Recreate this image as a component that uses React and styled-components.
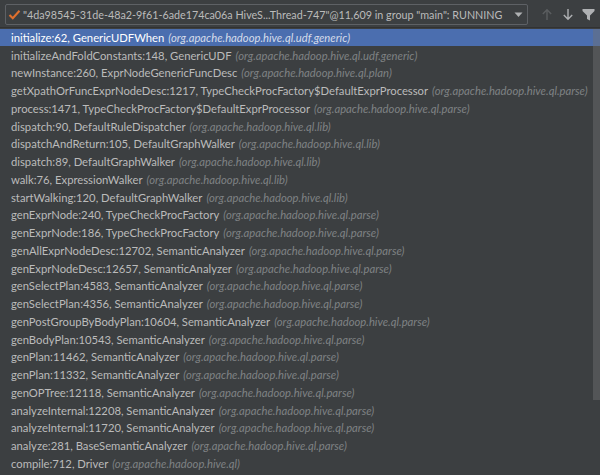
import React from "react";
import styled, { createGlobalStyle } from "styled-components";

const GlobalStyle = createGlobalStyle`
    html, body {
        margin: 0;
        padding: 0;
        background: #3c3f41;
        overflow: hidden;
    }
`

const frames = [
    ["initialize:62, GenericUDFWhen", "org.apache.hadoop.hive.ql.udf.generic"],
    ["initializeAndFoldConstants:148, GenericUDF", "org.apache.hadoop.hive.ql.udf.generic"],
    ["newInstance:260, ExprNodeGenericFuncDesc", "org.apache.hadoop.hive.ql.plan"],
    ["getXpathOrFuncExprNodeDesc:1217, TypeCheckProcFactory$DefaultExprProcessor", "org.apache.hadoop.hive.ql.parse"],
    ["process:1471, TypeCheckProcFactory$DefaultExprProcessor", "org.apache.hadoop.hive.ql.parse"],
    ["dispatch:90, DefaultRuleDispatcher", "org.apache.hadoop.hive.ql.lib"],
    ["dispatchAndReturn:105, DefaultGraphWalker", "org.apache.hadoop.hive.ql.lib"],
    ["dispatch:89, DefaultGraphWalker", "org.apache.hadoop.hive.ql.lib"],
    ["walk:76, ExpressionWalker", "org.apache.hadoop.hive.ql.lib"],
    ["startWalking:120, DefaultGraphWalker", "org.apache.hadoop.hive.ql.lib"],
    ["genExprNode:240, TypeCheckProcFactory", "org.apache.hadoop.hive.ql.parse"],
    ["genExprNode:186, TypeCheckProcFactory", "org.apache.hadoop.hive.ql.parse"],
    ["genAllExprNodeDesc:12702, SemanticAnalyzer", "org.apache.hadoop.hive.ql.parse"],
    ["genExprNodeDesc:12657, SemanticAnalyzer", "org.apache.hadoop.hive.ql.parse"],
    ["genSelectPlan:4583, SemanticAnalyzer", "org.apache.hadoop.hive.ql.parse"],
    ["genSelectPlan:4356, SemanticAnalyzer", "org.apache.hadoop.hive.ql.parse"],
    ["genPostGroupByBodyPlan:10604, SemanticAnalyzer", "org.apache.hadoop.hive.ql.parse"],
    ["genBodyPlan:10543, SemanticAnalyzer", "org.apache.hadoop.hive.ql.parse"],
    ["genPlan:11462, SemanticAnalyzer", "org.apache.hadoop.hive.ql.parse"],
    ["genPlan:11332, SemanticAnalyzer", "org.apache.hadoop.hive.ql.parse"],
    ["genOPTree:12118, SemanticAnalyzer", "org.apache.hadoop.hive.ql.parse"],
    ["analyzeInternal:12208, SemanticAnalyzer", "org.apache.hadoop.hive.ql.parse"],
    ["analyzeInternal:11720, SemanticAnalyzer", "org.apache.hadoop.hive.ql.parse"],
    ["analyze:281, BaseSemanticAnalyzer", "org.apache.hadoop.hive.ql.parse"],
    ["compile:712, Driver", "org.apache.hadoop.hive.ql"],
    ["compileInternal:1818, Driver", "org.apache.hadoop.hive.ql"],
]

const App = () => {
    return (
        <>
            <GlobalStyle />
            <Panel>
                <Toolbar>
                    <Combo>
                        <CheckIcon width="13" height="13" viewBox="0 0 13 13">
                            <path d="M1.5 7 L4.8 10.3 L11.5 2.8" fill="none" stroke="#e0702e" strokeWidth="2.1" />
                        </CheckIcon>
                        <ComboText>"4da98545-31de-48a2-9f61-6ade174ca06a HiveS...Thread-747"@11,609 in group "main": RUNNING</ComboText>
                        <ComboArrow width="9" height="6" viewBox="0 0 9 6">
                            <path d="M0.5 0.5 H8.5 L4.5 5 Z" fill="#afb1b3" />
                        </ComboArrow>
                    </Combo>
                    <ToolButton $disabled>
                        <svg width="12" height="13" viewBox="0 0 12 13">
                            <path d="M6 12 V2 M1.8 6 L6 1.8 L10.2 6" fill="none" stroke="currentColor" strokeWidth="1.4" />
                        </svg>
                    </ToolButton>
                    <ToolButton>
                        <svg width="12" height="13" viewBox="0 0 12 13">
                            <path d="M6 1 V11 M1.8 7 L6 11.2 L10.2 7" fill="none" stroke="currentColor" strokeWidth="1.4" />
                        </svg>
                    </ToolButton>
                    <ToolButton>
                        <svg width="13" height="13" viewBox="0 0 13 13">
                            <path d="M0.5 1 H12.5 V3 L8 7.5 V12.5 L5 11 V7.5 L0.5 3 Z" fill="currentColor" />
                        </svg>
                    </ToolButton>
                </Toolbar>
                <List>
                    {frames.map(([method, pkg], i) => (
                        <Row key={i} $selected={i === 0}>
                            <Method>{method}</Method>
                            <Pkg $selected={i === 0}>({pkg})</Pkg>
                        </Row>
                    ))}
                    <ScrollThumb />
                </List>
            </Panel>
        </>
    );
}

export default App;

const Panel = styled.div`
    width: 600px;
    height: 475px;
    display: flex;
    flex-direction: column;
    background: #3c3f41;
    font-family: Lato, "Noto Sans", sans-serif;
    font-size: 11.25px;
    color: #bbbbbb;
    overflow: hidden;
`

const Toolbar = styled.div`
    height: 28px;
    box-sizing: border-box;
    border-bottom: 1px solid #323232;
    display: flex;
    align-items: flex-start;
    padding: 4px 0 0 5px;
    flex-shrink: 0;
`

const Combo = styled.div`
    width: 523px;
    height: 21px;
    box-sizing: border-box;
    border: 1px solid #5e6165;
    border-radius: 2px;
    display: flex;
    align-items: center;
    padding: 0 4px 0 2px;
    margin-right: 8px;
`

const CheckIcon = styled.svg`
    flex-shrink: 0;
    margin-right: 2px;
`

const ComboText = styled.span`
    white-space: nowrap;
    color: #bbbbbb;
    font-size: 10.75px;
`

const ComboArrow = styled.svg`
    flex-shrink: 0;
    margin-left: auto;
`

const ToolButton = styled.div`
    width: 21px;
    height: 21px;
    display: flex;
    align-items: center;
    justify-content: center;
    color: ${p => (p.$disabled ? "#5b5e60" : "#afb1b3")};
`

const List = styled.div`
    position: relative;
    flex: 1;
    padding-top: 0.5px;
    overflow: hidden;
`

const Row = styled.div`
    height: 17.75px;
    display: flex;
    align-items: center;
    padding-left: 11px;
    white-space: nowrap;
    background: ${p => (p.$selected ? "#4b6eaf" : "transparent")};
    color: ${p => (p.$selected ? "#ffffff" : "#bbbbbb")};
`

const Method = styled.span`
    margin-right: 4px;
`

const Pkg = styled.span`
    font-style: italic;
    color: ${p => (p.$selected ? "#d5dcea" : "#7f8284")};
`

const ScrollThumb = styled.div`
    position: absolute;
    right: 0;
    top: 1px;
    width: 7px;
    height: 371px;
    background: rgba(110, 113, 116, 0.45);
`
